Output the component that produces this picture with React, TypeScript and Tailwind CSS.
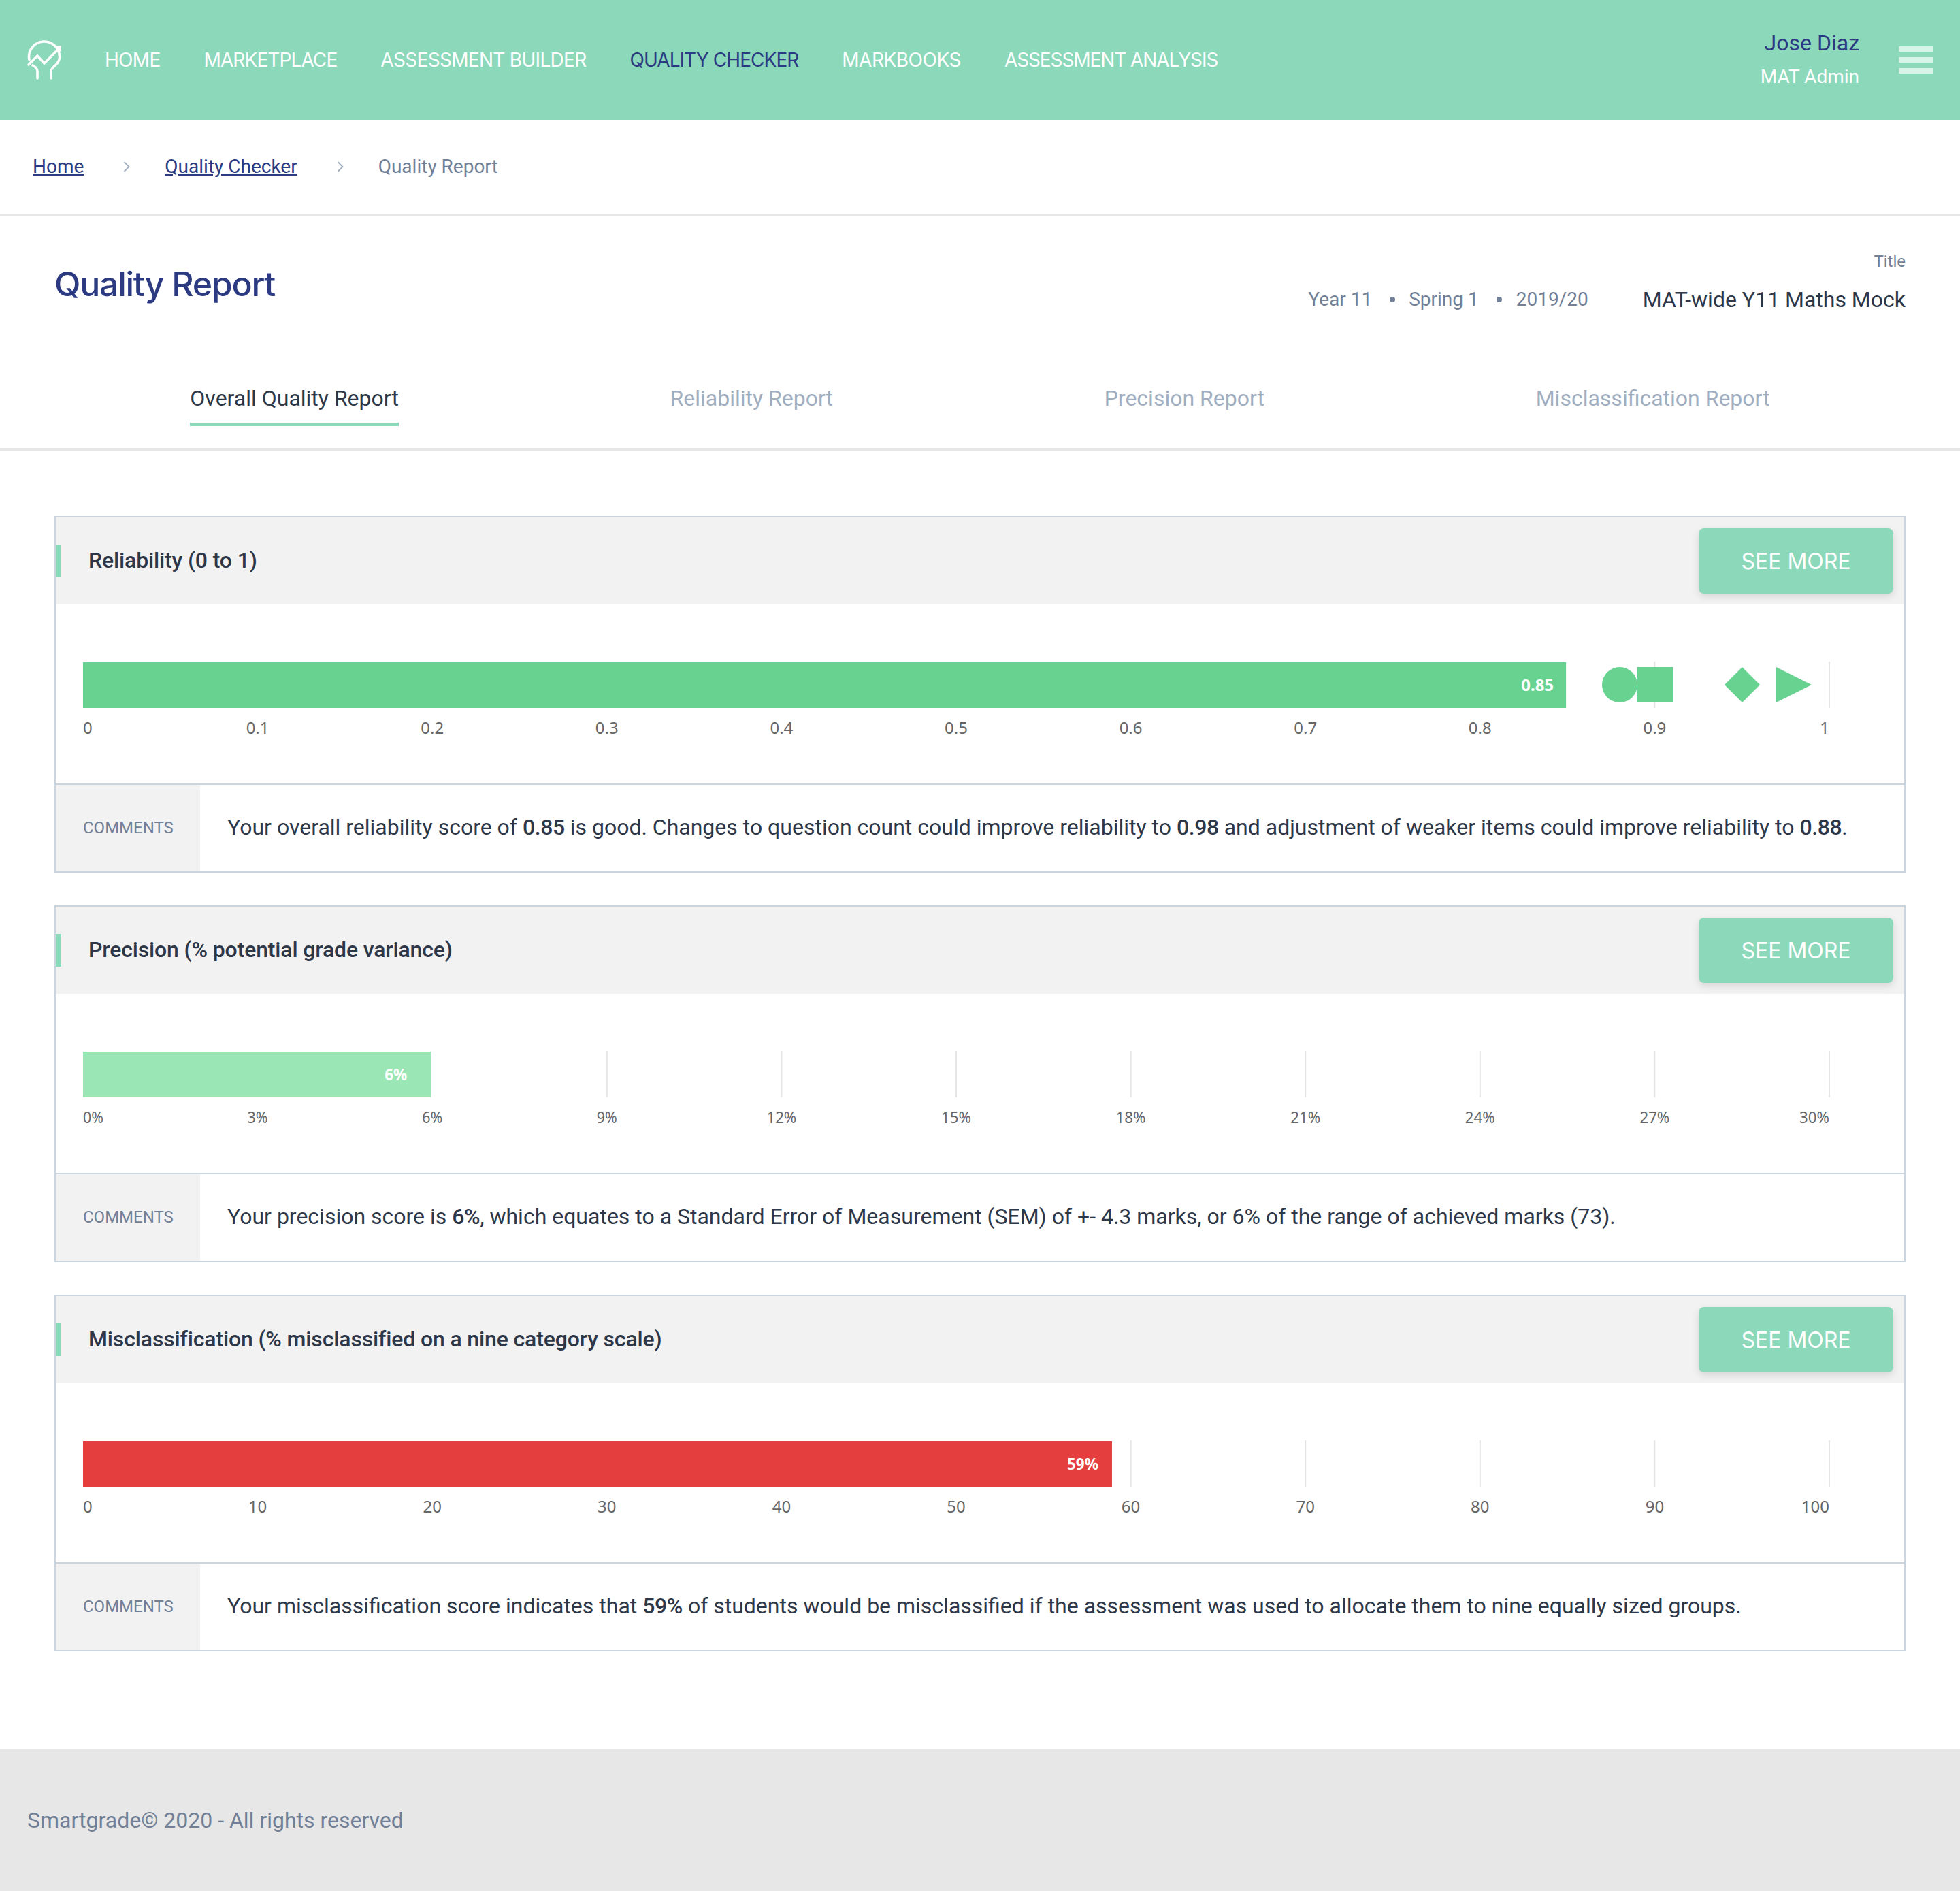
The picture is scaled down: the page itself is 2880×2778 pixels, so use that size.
import React from 'react';

const NAV = [
  { label: 'HOME', cls: '' },
  { label: 'MARKETPLACE', cls: 'tracking-[-0.9px]' },
  { label: 'ASSESSMENT BUILDER', cls: '' },
  { label: 'QUALITY CHECKER', cls: 'tracking-[-0.95px] text-[#2c3a82]' },
  { label: 'MARKBOOKS', cls: 'tracking-[-0.5px]' },
  { label: 'ASSESSMENT ANALYSIS', cls: 'tracking-[-1.1px]' },
];
const TABS = ['Overall Quality Report', 'Reliability Report', 'Precision Report', 'Misclassification Report'];

const Logo = () => (
  <svg viewBox="0 0 50 60" className="w-[50px] h-[60px]" fill="none" stroke="white" strokeWidth="3.6" strokeLinecap="round" strokeLinejoin="round">
    <path d="M3 30 A22.5 22.5 0 1 1 47.5 27 C47 33 43 37 38 41 C36 43 35 44 35 47 V57" />
    <path d="M8 38 C12 40 15 43 15 47 V57" />
    <path d="M2 37 L15 24 L25 35 L48 12" />
    <path d="M44 11 H49 V16" />
  </svg>
);

const Chevron = () => (
  <svg viewBox="0 0 10 16" className="w-[10px] h-4 ml-[58px] mr-[51px]" fill="none" stroke="#a0aec0" strokeWidth="1.8">
    <path d="M1.5 1 L8.5 8 L1.5 15" />
  </svg>
);

// chart is drawn in its own svg, x0 = left edge of scale, w = full scale width
const X0 = 40;
const W = 2566;

type Tick = { label: string; at: number };

// the % sign is narrower in the reference than in Noto Sans
const pctWidth = (s: string) => (s.endsWith('%') ? (s.length === 2 ? 30 : 44) : undefined);

const Chart = ({ ticks, value, label, color, inset, markers }: { ticks: Tick[]; value: number; label: string; color: string; inset: number; markers?: boolean }) => {
  const end = X0 + value * W - 2;
  const labelW = label.endsWith('%') ? (label.length === 2 ? 33 : 46) : undefined;
  return (
    <svg width="2716" height="263" className="block" fontFamily="'Noto Sans', sans-serif">
      {ticks.map((t, i) => {
        const x = X0 + t.at * W;
        const anchor = i === 0 ? 'start' : i === ticks.length - 1 ? 'end' : 'middle';
        return (
          <g key={t.label}>
            {x > end + 4 && <rect x={x - 1} y={84} width={2} height={68} fill="#e5e5e5" />}
            <text x={x} y={190} textAnchor={anchor} fontSize={24} fill="#666666" textLength={pctWidth(t.label)} lengthAdjust="spacingAndGlyphs">{t.label}</text>
          </g>
        );
      })}
      <rect x={X0} y={85} width={end - X0} height={67} fill={color} />
      <text x={end - inset} y={127} textAnchor="end" fontSize={24} fontWeight={700} fill="white" textLength={labelW} lengthAdjust="spacingAndGlyphs">{label}</text>
      {markers && (
        <g fill="#68d391">
          <circle cx={2298} cy={118} r={26} />
          <rect x={2324} y={92} width={52} height={52} />
          <polygon points="2478,92 2504,118 2478,144 2452,118" />
          <polygon points="2528,92 2580,118 2528,144" />
        </g>
      )}
    </svg>
  );
};

const Section = ({ title, chart, children }: { title: string; chart: React.ReactNode; children: React.ReactNode }) => (
  <section className="border-2 border-[#cbd5e0] mb-[48px] last:mb-0">
    <div className="h-[128px] bg-[#f2f2f2] flex items-center justify-between pr-4">
      <div className="flex items-center">
        <div className="w-2 h-12 bg-[#8bd8bb]" />
        <h2 className="ml-10 pb-[2px] text-[32px] tracking-[-0.14px] font-medium text-[#2d3748]">{title}</h2>
      </div>
      <button className="w-[286px] h-[96px] pt-[2px] rounded-lg bg-[#8bd8bb] text-white text-[32px] font-[Inter,sans-serif] shadow-[0_4px_12px_rgba(0,0,0,0.12)]">SEE MORE</button>
    </div>
    {chart}
    <div className="border-t-2 border-[#cbd5e0] flex h-[129px]">
      <div className="w-[212px] bg-[#f2f2f2] flex items-center pl-10 pb-[2px] text-2xl text-[#718096]">COMMENTS</div>
      <p className="flex items-center pl-10 pb-[3px] text-[32px] text-[#2d3748] whitespace-pre">{children}</p>
    </div>
  </section>
);

const B = ({ children }: { children: React.ReactNode }) => <span className="font-medium tracking-[-0.4px]">{children}</span>;

const App = () => {
  return (
    <div className="w-[2880px] h-[2778px] bg-white flex flex-col font-[Roboto,sans-serif]">
      <header className="h-[176px] shrink-0 bg-[#8bd8bb] flex items-center pl-10 pr-10">
        <Logo />
        <nav className="ml-16 flex gap-16 text-[28px] font-[Inter,sans-serif] text-white tracking-tight">
          {NAV.map((n) => (
            <span key={n.label} className={n.cls}>{n.label}</span>
          ))}
        </nav>
        <div className="ml-auto text-right">
          <div className="text-[32px] text-[#2c3a82] leading-[50px]">Jose Diaz</div>
          <div className="text-[28px] text-white leading-[50px]">MAT Admin</div>
        </div>
        <div className="ml-[58px] flex flex-col gap-2">
          <div className="w-[50px] h-2 bg-[#d8f3e7]" />
          <div className="w-[50px] h-2 bg-[#d8f3e7]" />
          <div className="w-[50px] h-2 bg-[#d8f3e7]" />
        </div>
      </header>

      <div className="h-[142px] shrink-0 border-b-4 border-[#e6e6e6] flex items-center pl-12 text-[28px]">
        <a className="text-[#2c3a82] underline">Home</a>
        <Chevron />
        <a className="text-[#2c3a82] underline">Quality Checker</a>
        <Chevron />
        <span className="text-[#718096]">Quality Report</span>
      </div>

      <div className="flex justify-between items-start px-20 pt-[50px] h-[190px] shrink-0">
        <h1 className="-mt-[1px] text-[50px] font-[Inter,sans-serif] font-medium text-[#2c3a82] leading-[100px] tracking-tight">Quality Report</h1>
        <div className="flex flex-col items-end">
          <div className="text-2xl text-[#718096] leading-[32px]">Title</div>
          <div className="flex items-center mt-[16px]">
            <span className="text-[28px] text-[#718096]">Year 11</span>
            <span className="ml-[26px] mr-[20px] w-2 h-2 rounded-full bg-[#718096]" />
            <span className="text-[28px] text-[#718096]">Spring 1</span>
            <span className="ml-[26px] mr-[21px] w-2 h-2 rounded-full bg-[#718096]" />
            <span className="text-[28px] text-[#718096]">2019/20</span>
            <span className="ml-20 text-[32px] text-[#2d3748]">MAT-wide Y11 Maths Mock</span>
          </div>
        </div>
      </div>

      <div className="h-[154px] shrink-0 border-b-4 border-[#e6e6e6] flex justify-around px-20 items-end text-[32px] text-[#a0aec0]">
        {TABS.map((t, i) => (
          <div key={t} className={i === 0 ? 'pb-[12px] border-b-[5px] border-[#8bd8bb] text-[#2d3748] mb-[32px]' : 'pb-[17px] mb-[32px]'}>{t}</div>
        ))}
      </div>

      <main className="px-20 pt-[96px]">
        <Section
          title="Reliability (0 to 1)"
          chart={
            <Chart
              value={0.85}
              label="0.85"
              color="#68d391"
              inset={18}
              markers
              ticks={['0', '0.1', '0.2', '0.3', '0.4', '0.5', '0.6', '0.7', '0.8', '0.9', '1'].map((l, i) => ({ label: l, at: i / 10 }))}
            />
          }
        >
          Your overall reliability score of <B>0.85</B> is good. Changes to question count could improve reliability to <B>0.98</B> and adjustment of weaker items could improve reliability to <B>0.88</B>.
        </Section>
        <Section
          title="Precision (% potential grade variance)"
          chart={
            <Chart
              value={0.2}
              label="6%"
              color="#9ae6b4"
              inset={35}
              ticks={[0, 3, 6, 9, 12, 15, 18, 21, 24, 27, 30].map((n, i) => ({ label: `${n}%`, at: i / 10 }))}
            />
          }
        >
          Your precision score is <B>6%</B>, which equates to a Standard Error of Measurement (SEM) of +- 4.3 marks, or 6% of the range of achieved marks (73).
        </Section>
        <Section
          title="Misclassification (% misclassified on a nine category scale)"
          chart={
            <Chart
              value={0.59}
              label="59%"
              color="#e53e3e"
              inset={20}
              ticks={[0, 10, 20, 30, 40, 50, 60, 70, 80, 90, 100].map((n, i) => ({ label: String(n), at: i / 10 }))}
            />
          }
        >
          Your misclassification score indicates that <B>59%</B> of students would be misclassified if the assessment was used to allocate them to nine equally sized groups.
        </Section>
      </main>

      <footer className="mt-auto h-[208px] bg-[#e7e7e7] flex items-center pl-10 text-[32px] text-[#718096]">
        Smartgrade© 2020 - All rights reserved
      </footer>
    </div>
  );
};

export default App;
